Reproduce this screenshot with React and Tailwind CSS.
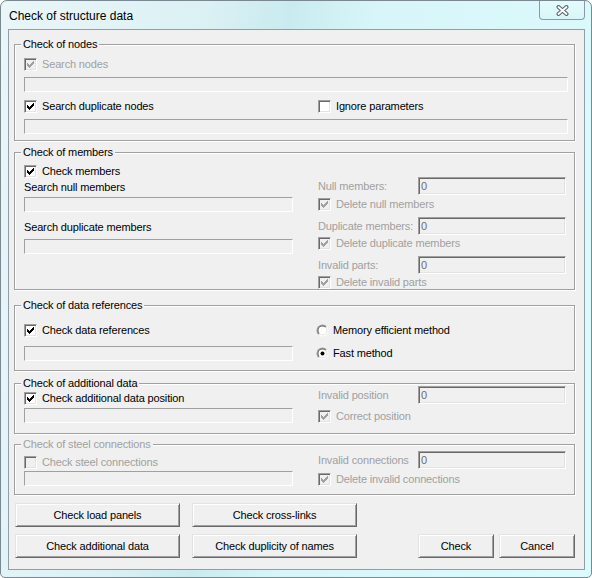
import React from "react";

const dim = "text-[#a0a0a0]";

// classic 3D checkbox, 13x13
const Check = ({ checked, disabled }) => {
  const ink = disabled ? "#a0a0a0" : "#000";
  const marks = [[3, 5], [4, 6], [5, 7], [6, 6], [7, 5], [8, 4], [9, 3]];
  return (
    <span
      className={`relative inline-block w-[13px] h-[13px] shrink-0 border border-t-[#a0a0a0] border-l-[#a0a0a0] border-r-white border-b-white shadow-[inset_1px_1px_#696969,inset_-1px_-1px_#e3e3e3] ${
        disabled ? "bg-[#f0f0f0]" : "bg-white"
      }`}
    >
      {checked && (
        <svg className="absolute -left-px -top-px" width="13" height="13" viewBox="0 0 13 13" shapeRendering="crispEdges">
          {marks.map(([x, y]) => (
            <rect key={x} x={x} y={y} width="1" height="3" fill={ink} />
          ))}
        </svg>
      )}
    </span>
  );
};

const CheckRow = ({ label, checked, disabled, short, className = "" }) => (
  <div className={`flex items-center ${short ? "h-[13px]" : "h-[14px]"} ${className}`}>
    <Check checked={checked} disabled={disabled} />
    <span className={`ml-[5px] ${disabled ? dim : "text-black"}`}>{label}</span>
  </div>
);

const Radio = ({ on }) => (
  <svg width="13" height="13" viewBox="0 0 13 13" className="shrink-0">
    <defs>
      <linearGradient id="rdo" x1="0" y1="0" x2="1" y2="1">
        <stop offset="0.45" stopColor="#a0a0a0" />
        <stop offset="0.55" stopColor="#ffffff" />
      </linearGradient>
      <linearGradient id="rdi" x1="0" y1="0" x2="1" y2="1">
        <stop offset="0.45" stopColor="#696969" />
        <stop offset="0.55" stopColor="#e3e3e3" />
      </linearGradient>
    </defs>
    <circle cx="6.5" cy="6.5" r="6" fill="url(#rdo)" />
    <circle cx="6.5" cy="6.5" r="5" fill="url(#rdi)" />
    <circle cx="6.5" cy="6.5" r="4" fill="#fff" />
    {on && <circle cx="6.5" cy="6.5" r="2" fill="#000" />}
  </svg>
);

const RadioRow = ({ label, on, className = "" }) => (
  <div className={`flex items-center h-[14px] ${className}`}>
    <Radio on={on} />
    <span className="ml-[4px] text-black">{label}</span>
  </div>
);

// thin disabled list/edit strip
const Strip = ({ className = "" }) => (
  <div className={`h-[15px] border border-t-[#a0a0a0] border-l-[#a0a0a0] border-r-white border-b-white ${className}`} />
);

const Text = ({ children, disabled, className = "" }) => (
  <div className={`h-[13px] flex items-center ${disabled ? dim : "text-black"} ${className}`}>{children}</div>
);

const NumField = ({ label, className = "" }) => (
  <div className={`flex items-center h-[18px] ${className}`}>
    <span className={`w-[100px] ${dim}`}>{label}</span>
    <div className="flex items-center w-[148px] h-[18px] pl-[2px] border border-t-[#a0a0a0] border-l-[#a0a0a0] border-r-white border-b-white shadow-[inset_1px_1px_#696969,inset_-1px_-1px_#e3e3e3] text-[#6d6d6d]">
      0
    </div>
  </div>
);

const Group = ({ title, disabled, className = "", children }) => (
  <fieldset className={`border border-[#a0a0a0] shadow-[inset_1px_1px_#fff,1px_1px_#fff] ${className}`}>
    <legend className={`ml-[6px] px-[2px] leading-[13px] bg-[#f0f0f0] ${disabled ? dim : "text-black"}`}>{title}</legend>
    {children}
  </fieldset>
);

const Btn = ({ children, className = "" }) => (
  <button className={`h-[24px] bg-[#f0f0f0] text-black border border-t-[#e3e3e3] border-l-[#e3e3e3] border-r-[#696969] border-b-[#696969] shadow-[inset_1px_1px_#fff,inset_-1px_-1px_#a0a0a0] ${className}`}>
    {children}
  </button>
);

const App = () => {
  return (
    <div className="w-[592px] h-[578px] bg-white font-['Liberation_Sans',Arial,sans-serif]">
      <div className="flex flex-col w-full h-full rounded-t-[7px] rounded-b-[5px] border border-[#7a8891] bg-[linear-gradient(100deg,#eaf6f8_0%,#dbf1f4_30%,#c9ebef_42%,#d8f6f9_55%,#dcfbfd_100%)]">
        {/* Title bar */}
        <div className="flex items-start h-[28px]">
          <div className="pl-[8px] pt-[8px] text-[12px] leading-[14px] text-black">Check of structure data</div>
          <div className="ml-auto mr-[6px] w-[46px] h-[19px] flex items-center justify-center rounded-b-[4px] border border-t-0 border-[#8d9aa5] bg-[linear-gradient(180deg,#e4fbfc,#d8f7f9)]">
            <svg width="13" height="11" viewBox="0 0 13 11">
              <path d="M2.5 2 L10.5 9 M10.5 2 L2.5 9" stroke="#5b6670" strokeWidth="4" strokeLinecap="round" />
              <path d="M2.5 2 L10.5 9 M10.5 2 L2.5 9" stroke="#ffffff" strokeWidth="1.8" strokeLinecap="round" />
            </svg>
          </div>
        </div>

        {/* Client area */}
        <div className="ml-[7px] mr-[6px] h-[541px] border border-[#8f9ea8] bg-[#f0f0f0] pl-[5px] pr-[9px] flex flex-col text-[11px] tracking-[-0.15px] leading-[13px]">
          <Group title="Check of nodes" className="mt-[8px]">
            <div className="pl-[9px] pr-[6px] pb-[6px]">
              <CheckRow className="mt-[6px]" label="Search nodes" checked disabled />
              <Strip className="mt-[6px]" />
              <div className="flex mt-[7px]">
                <div className="w-[294px]">
                  <CheckRow label="Search duplicate nodes" checked />
                </div>
                <CheckRow label="Ignore parameters" />
              </div>
              <Strip className="mt-[6px]" />
            </div>
          </Group>

          <Group title="Check of members" className="mt-[5px]">
            <div className="flex items-start pl-[9px] pr-[8px]">
              <div className="w-[269px]">
                <CheckRow className="mt-[5px]" label="Check members" checked />
                <Text className="mt-[3px]">Search null members</Text>
                <Strip className="mt-[3px]" />
                <Text className="mt-[9px]">Search duplicate members</Text>
                <Strip className="mt-[5px]" />
              </div>
              <div className="ml-[25px] w-[248px]">
                <NumField className="mt-[18px]" label="Null members:" />
                <CheckRow short className="mt-[3px]" label="Delete null members" checked disabled />
                <NumField className="mt-[6px]" label="Duplicate members:" />
                <CheckRow short className="mt-[2px]" label="Delete duplicate members" checked disabled />
                <NumField className="mt-[6px]" label="Invalid parts:" />
                <CheckRow short className="mt-[2px]" label="Delete invalid parts" checked disabled />
              </div>
            </div>
          </Group>

          <Group title="Check of data references" className="mt-[9px]">
            <div className="flex items-start pl-[9px] pr-[8px] pb-[9px]">
              <div className="w-[269px]">
                <CheckRow className="mt-[11px]" label="Check data references" checked />
                <Strip className="mt-[9px]" />
              </div>
              <div className="ml-[23px]">
                <RadioRow className="mt-[11px]" label="Memory efficient method" />
                <RadioRow className="mt-[9px]" label="Fast method" on />
              </div>
            </div>
          </Group>

          <Group title="Check of additional data" className="mt-[6px]">
            <div className="flex items-start pl-[9px] pr-[8px] pb-[10px]">
              <div className="w-[269px]">
                <CheckRow className="mt-[1px]" label="Check additional data position" checked />
                <Strip className="mt-[3px]" />
              </div>
              <div className="ml-[25px] w-[248px] -mt-[4px]">
                <NumField label="Invalid position" />
                <CheckRow short className="mt-[6px]" label="Correct position" checked disabled />
              </div>
            </div>
          </Group>

          <Group title="Check of steel connections" disabled className="mt-[4px]">
            <div className="flex items-start pl-[9px] pr-[8px] pb-[8px]">
              <div className="w-[269px]">
                <CheckRow className="mt-[4px]" label="Check steel connections" disabled />
                <Strip className="mt-[2px]" />
              </div>
              <div className="ml-[25px] w-[248px]">
                <NumField label="Invalid connections" />
                <CheckRow short className="mt-[4px]" label="Delete invalid connections" checked disabled />
              </div>
            </div>
          </Group>

          {/* Buttons */}
          <div className="flex ml-[1px] mt-[8px] gap-[12px]">
            <Btn className="w-[165px]">Check load panels</Btn>
            <Btn className="w-[165px]">Check cross-links</Btn>
          </div>
          <div className="flex ml-[1px] mt-[7px]">
            <Btn className="w-[165px]">Check additional data</Btn>
            <Btn className="w-[165px] ml-[12px]">Check duplicity of names</Btn>
            <Btn className="w-[76px] ml-auto">Check</Btn>
            <Btn className="w-[76px] ml-[5px]">Cancel</Btn>
          </div>
        </div>
      </div>
    </div>
  );
};

export default App;
